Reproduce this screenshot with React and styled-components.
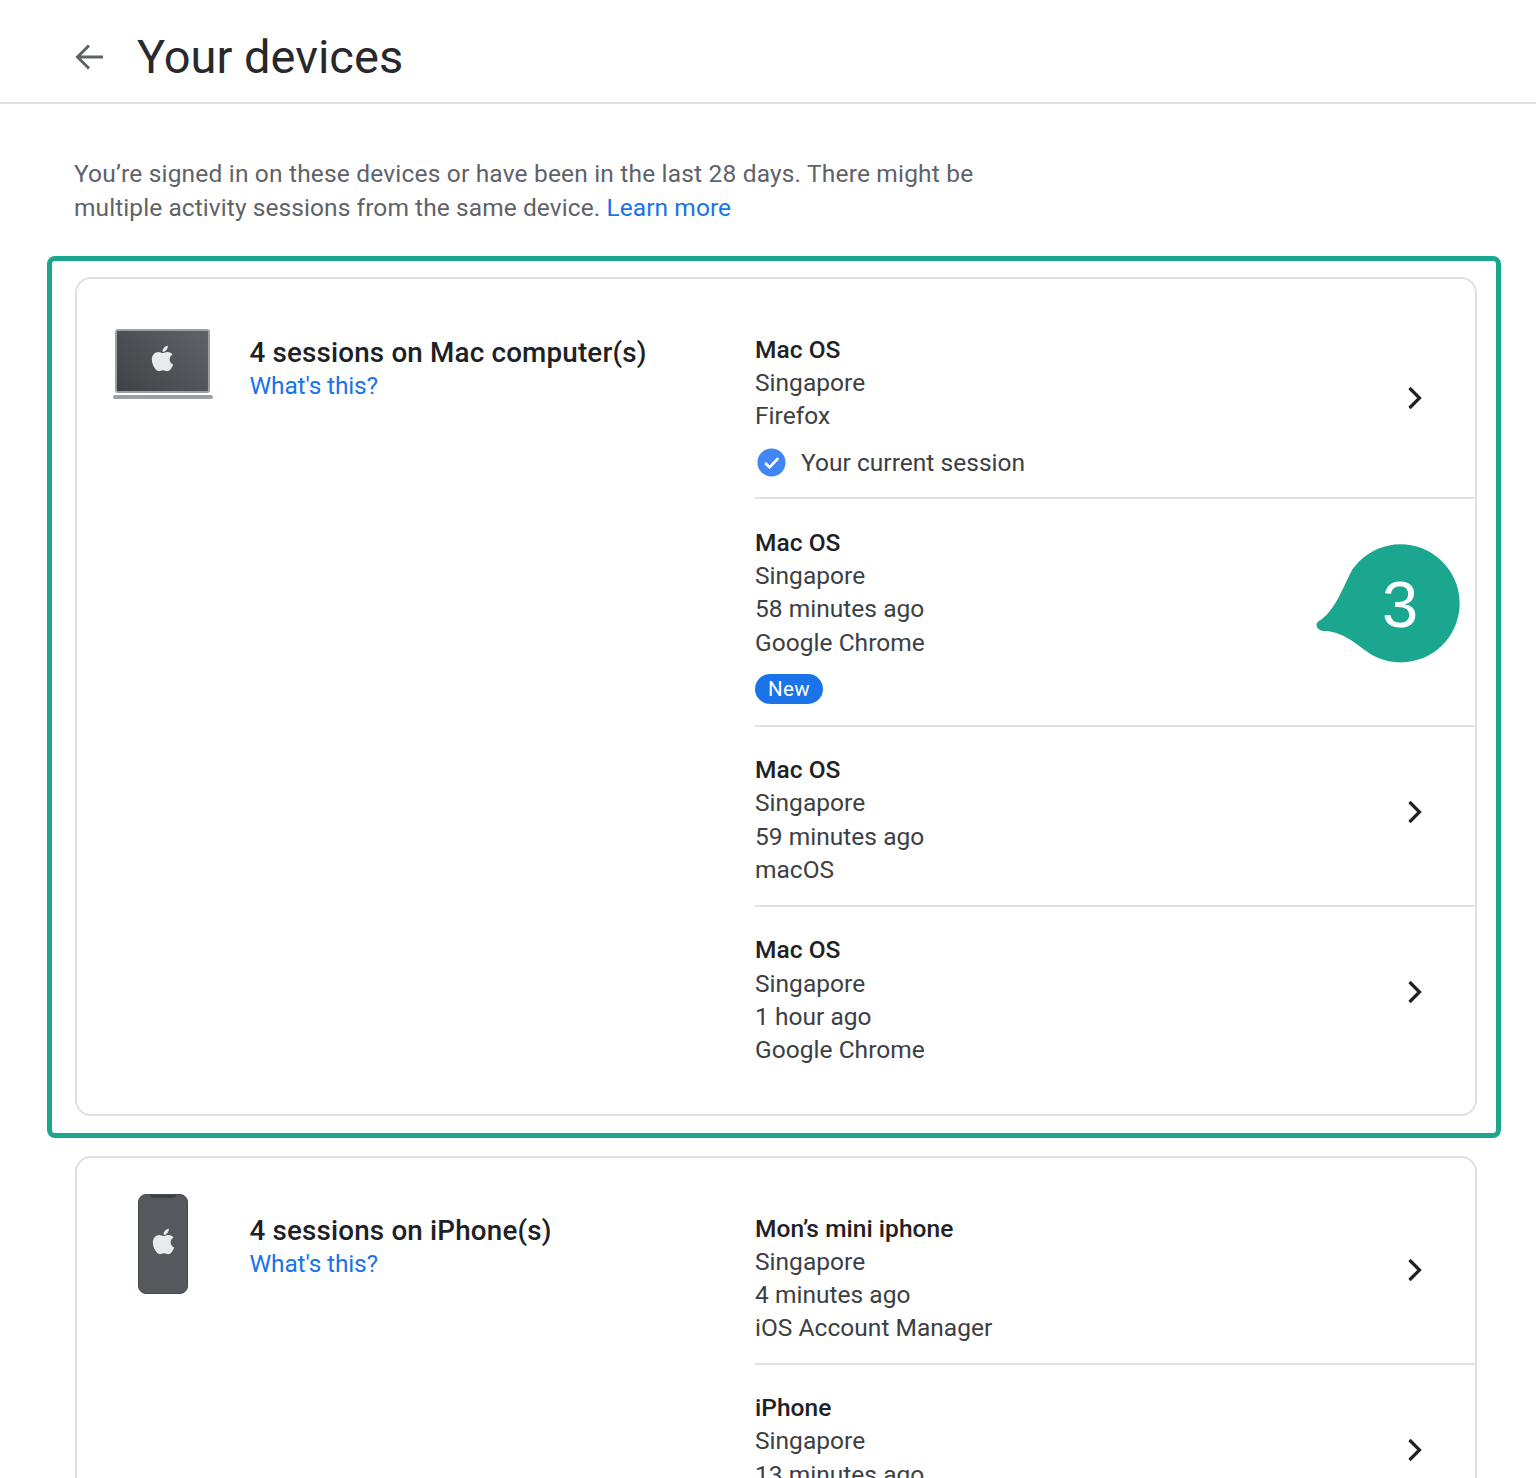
import React from "react";
import styled, { createGlobalStyle } from "styled-components";
import { FaApple } from "react-icons/fa";

const Global = createGlobalStyle`
  html, body { margin: 0; padding: 0; background: #fff; }
  body { font-family: Roboto, "Liberation Sans", sans-serif; color: #202124; }
`;

const Page = styled.div`
  position: relative;
  width: 1536px;
  height: 1478px;
  overflow: hidden;
  background: #fff;
`;

const Header = styled.header`
  height: 104px;
  border-bottom: 2px solid #dfe0e4;
  display: flex;
  align-items: center;
  padding: 12px 0 0 74px;
  box-sizing: border-box;
  gap: 31px;
  svg { display: block; }
`;

const Title = styled.h1`
  margin: 0;
  font-size: 47px;
  line-height: 56px;
  font-weight: 400;
  color: #28292c;
`;

const Intro = styled.div`
  margin: 53px 0 0 74px;
  width: 920px;
  font-size: 24.5px;
  line-height: 33.5px;
  color: #5f6368;
`;

const IntroLine = styled.div`
  letter-spacing: ${(p) => p.$spacing}px;
  white-space: nowrap;
`;

const Link = styled.a`
  color: #1a73e8;
  text-decoration: none;
`;

const Highlight = styled.div`
  margin: 32px 0 0 47px;
  width: 1454px;
  height: 882px;
  box-sizing: border-box;
  border: 5px solid #1ba690;
  border-radius: 8px;
  padding: 16px 0 0 23px;
`;

const Card = styled.section`
  width: 1402px;
  box-sizing: border-box;
  border: 2px solid #dfe0e4;
  border-radius: 16px;
  padding: 27px 0 29.5px;
  display: flex;
  margin-left: ${(p) => p.$left || 0}px;
  margin-top: ${(p) => p.$top || 0}px;
`;

const DeviceSide = styled.div`
  width: 678px;
  flex: none;
  display: flex;
  align-items: flex-start;
`;

const IconSlot = styled.div`
  width: 172.5px;
  flex: none;
  display: flex;
  justify-content: flex-end;
  padding-right: 36.5px;
  box-sizing: border-box;
  padding-top: ${(p) => p.$top}px;
`;

const Laptop = styled.div`
  width: 100px;
  display: flex;
  flex-direction: column;
  align-items: center;
  &::after {
    content: "";
    width: 100px;
    height: 4px;
    margin-top: 2px;
    border-radius: 2px;
    background: #9aa0a6;
  }
`;

const LaptopScreen = styled.div`
  width: 95px;
  height: 64px;
  margin-right: 1px;
  box-sizing: border-box;
  border: 2px solid #9aa0a6;
  border-radius: 3px;
  background: linear-gradient(45deg, #3f4245, #5f6368);
  display: flex;
  align-items: center;
  justify-content: center;
  padding-bottom: 5px;
  color: #e8eaed;
  font-size: 29px;
`;

const Phone = styled.div`
  position: relative;
  width: 50px;
  height: 100px;
  box-sizing: border-box;
  margin-right: 25px;
  border-radius: 8px;
  background: #55585c;
  border: 1px solid #45484c;
  display: flex;
  align-items: center;
  justify-content: center;
  color: #e8eaed;
  font-size: 29px;
  padding-bottom: 6px;
  &::before {
    content: "";
    position: absolute;
    top: 0;
    left: 11px;
    width: 26px;
    height: 3px;
    border-radius: 0 0 3px 3px;
    background: #3c3f43;
  }
`;

const DeviceText = styled.div`
  padding-top: ${(p) => p.$top}px;
`;

const DeviceTitle = styled.h2`
  margin: 0;
  font-size: 27.8px;
  line-height: 33px;
  font-weight: 500;
  color: #202124;
  letter-spacing: 0.17px;
`;

const WhatLink = styled(Link)`
  display: block;
  font-size: 24.5px;
  line-height: 33px;
  letter-spacing: -0.15px;
`;

const Sessions = styled.div`
  flex: 1;
`;

const Row = styled.div`
  display: flex;
  align-items: center;
  justify-content: space-between;
  padding: 26.5px 0 ${(p) => p.$bottom ?? 18.5}px;
  border-bottom: ${(p) => (p.$last ? "none" : "2px solid #dfe0e4")};
`;

const RowBody = styled.div`
  font-size: 24.5px;
  line-height: 33.3px;
  color: #3c4043;
  letter-spacing: 0.03px;
`;

const Name = styled.div`
  font-weight: 500;
  color: #202124;
`;

const ChevronSlot = styled.div`
  width: 120px;
  flex: none;
  display: flex;
  justify-content: center;
  margin-bottom: 16px;
  svg { display: block; }
`;

const Current = styled.div`
  display: flex;
  align-items: center;
  gap: 15px;
  margin-top: 13px;
  height: 34px;
  padding-left: 2px;
  color: #3c4043;
`;

const NewTag = styled.span`
  display: flex;
  align-items: center;
  justify-content: center;
  width: 68px;
  height: 30px;
  box-sizing: border-box;
  padding-top: 2px;
  margin-top: 15px;
  border-radius: 15px;
  background: #1a73e8;
  color: #fff;
  font-size: 20.5px;
  letter-spacing: 0.4px;
`;

const Bubble = styled.div`
  position: absolute;
  left: 1310px;
  top: 540px;
  width: 150px;
  height: 125px;
  svg { position: absolute; inset: 0; }
`;

const BubbleNum = styled.span`
  position: absolute;
  left: 30px;
  top: 27px;
  width: 120px;
  text-align: center;
  font-family: "Liberation Sans", Arial, sans-serif;
  font-size: 65px;
  line-height: 75px;
  color: #fff;
`;

const Chevron = () => (
  <ChevronSlot>
    <svg width="18" height="26" viewBox="0 0 18 26" fill="none">
      <path d="M3.5 3 L13.5 13 L3.5 23" stroke="#202124" strokeWidth="3.2" />
    </svg>
  </ChevronSlot>
);

const Session = ({ name, lines, chevron = true, bottom, last, children }) => (
  <Row $bottom={bottom} $last={last}>
    <RowBody>
      <Name>{name}</Name>
      {lines.map((l) => (
        <div key={l}>{l}</div>
      ))}
      {children}
    </RowBody>
    {chevron && <Chevron />}
  </Row>
);

export default function App() {
  return (
    <Page>
      <Global />
      <Header>
        <svg width="32" height="32" viewBox="0 0 32 32" fill="none">
          <path d="M29 16 H4 M15 4.5 L3.5 16 L15 27.5" stroke="#5f6368" strokeWidth="3" />
        </svg>
        <Title>Your devices</Title>
      </Header>
      <Intro>
        <IntroLine $spacing={0.18}>
          You’re signed in on these devices or have been in the last 28 days. There might be
        </IntroLine>
        <IntroLine $spacing={0.08}>
          multiple activity sessions from the same device. <Link>Learn more</Link>
        </IntroLine>
      </Intro>
      <Highlight>
        <Card>
          <DeviceSide>
            <IconSlot $top={23}>
              <Laptop>
                <LaptopScreen>
                  <FaApple />
                </LaptopScreen>
              </Laptop>
            </IconSlot>
            <DeviceText $top={30}>
              <DeviceTitle>4 sessions on Mac computer(s)</DeviceTitle>
              <WhatLink>What's this?</WhatLink>
            </DeviceText>
          </DeviceSide>
          <Sessions>
            <Session name="Mac OS" lines={["Singapore", "Firefox"]} bottom={18}>
              <Current>
                <svg width="29" height="29" viewBox="0 0 30 30">
                  <circle cx="15" cy="15" r="14.5" fill="#4285f4" />
                  <path d="M8.5 15.5 L13 20 L22 10.5" fill="none" stroke="#fff" strokeWidth="2.8" />
                </svg>
                Your current session
              </Current>
            </Session>
            <Session
              name="Mac OS"
              lines={["Singapore", "58 minutes ago", "Google Chrome"]}
              chevron={false}
              bottom={20.5}
            >
              <NewTag>New</NewTag>
            </Session>
            <Session name="Mac OS" lines={["Singapore", "59 minutes ago", "macOS"]} />
            <Session name="Mac OS" lines={["Singapore", "1 hour ago", "Google Chrome"]} last />
          </Sessions>
        </Card>
      </Highlight>
      <Card $left={75} $top={18}>
        <DeviceSide>
          <IconSlot $top={9}>
            <Phone>
              <FaApple />
            </Phone>
          </IconSlot>
          <DeviceText $top={29}>
            <DeviceTitle>4 sessions on iPhone(s)</DeviceTitle>
            <WhatLink>What's this?</WhatLink>
          </DeviceText>
        </DeviceSide>
        <Sessions>
          <Session
            name="Mon’s mini iphone"
            lines={["Singapore", "4 minutes ago", "iOS Account Manager"]}
            bottom={18}
          />
          <Session name="iPhone" lines={["Singapore", "13 minutes ago", "Safari"]} />
        </Sessions>
      </Card>
      <Bubble>
        <svg width="150" height="125" viewBox="0 0 150 125">
          <path
            d="M42 30 A59 59 0 1 1 63 115.5 C50 108 36 92 15 91 C7 91 4 84 9 81 C24 72 32 50 42 30 Z"
            fill="#1ba690"
          />
        </svg>
        <BubbleNum>3</BubbleNum>
      </Bubble>
    </Page>
  );
}
